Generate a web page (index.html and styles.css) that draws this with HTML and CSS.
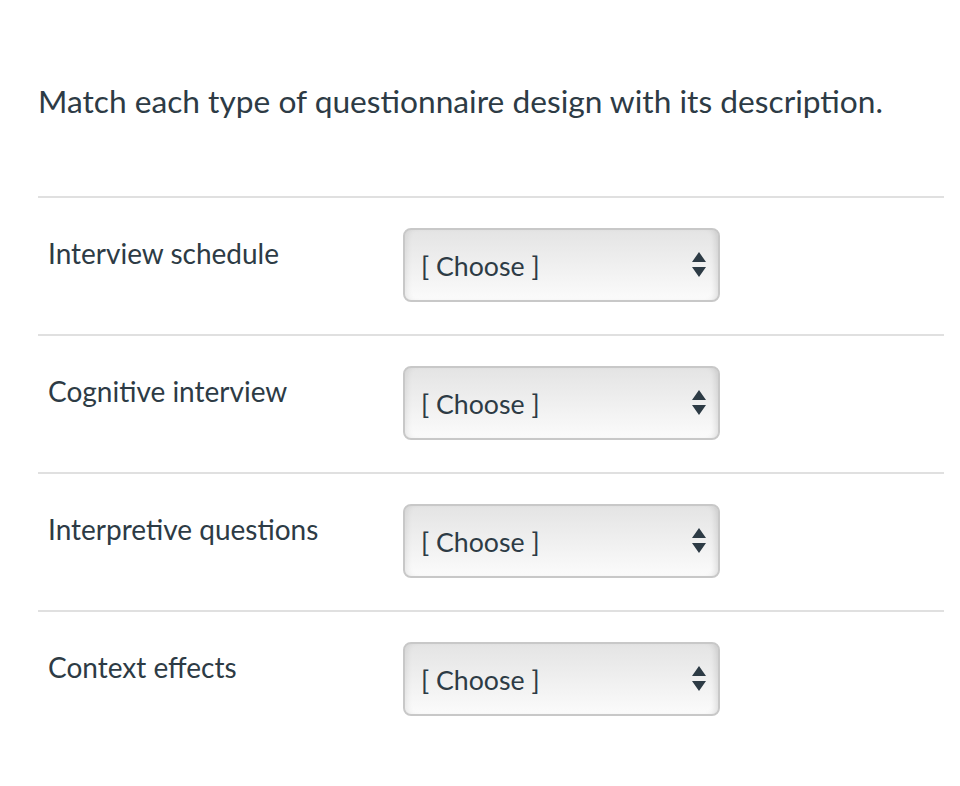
FILE: index.html
```html
<!DOCTYPE html>
<html lang="en">
<head>
<meta charset="utf-8">
<title>Matching question</title>
<link rel="stylesheet" href="styles.css">
</head>
<body>
<div class="question">
  <p class="prompt">Match each type of questionnaire design with its description.</p>
  <div class="answers">
    <div class="row">
      <div class="label">Interview schedule</div>
      <div class="select-wrap">
        <select class="select"><option>[ Choose ]</option></select>
        <svg class="arrows" width="14" height="25" viewBox="0 0 14 25"><path d="M7 0 L14 10 L0 10 Z M0 15 L14 15 L7 25 Z" fill="#2d3b45"/></svg>
      </div>
    </div>
    <div class="row">
      <div class="label">Cognitive interview</div>
      <div class="select-wrap">
        <select class="select"><option>[ Choose ]</option></select>
        <svg class="arrows" width="14" height="25" viewBox="0 0 14 25"><path d="M7 0 L14 10 L0 10 Z M0 15 L14 15 L7 25 Z" fill="#2d3b45"/></svg>
      </div>
    </div>
    <div class="row">
      <div class="label">Interpretive questions</div>
      <div class="select-wrap">
        <select class="select"><option>[ Choose ]</option></select>
        <svg class="arrows" width="14" height="25" viewBox="0 0 14 25"><path d="M7 0 L14 10 L0 10 Z M0 15 L14 15 L7 25 Z" fill="#2d3b45"/></svg>
      </div>
    </div>
    <div class="row">
      <div class="label">Context effects</div>
      <div class="select-wrap">
        <select class="select"><option>[ Choose ]</option></select>
        <svg class="arrows" width="14" height="25" viewBox="0 0 14 25"><path d="M7 0 L14 10 L0 10 Z M0 15 L14 15 L7 25 Z" fill="#2d3b45"/></svg>
      </div>
    </div>
  </div>
</div>
</body>
</html>
```
FILE: styles.css
```css
html, body {
  margin: 0;
  padding: 0;
  background: #ffffff;
}
body {
  font-family: Lato, "Liberation Sans", sans-serif;
  color: #2d3b45;
}
.question {
  padding: 0 16px 0 38px;
}
.prompt {
  margin: 0;
  padding-top: 79px;
  font-size: 31.7px;
  line-height: 44px;
  height: 117px;
}
.answers {
  display: flex;
  flex-direction: column;
}
.row {
  display: flex;
  align-items: flex-start;
  border-top: 2px solid #e0e0e0;
  padding: 30px 0 32px 10px;
}
.label {
  width: 355px;
  flex: none;
  font-size: 28px;
  line-height: 36px;
  padding-top: 7px;
}
.select-wrap {
  position: relative;
  width: 317px;
  height: 74px;
}
.select {
  appearance: none;
  -webkit-appearance: none;
  width: 100%;
  height: 100%;
  margin: 0;
  border: 2px solid #c8c8c8;
  border-radius: 8px;
  background: linear-gradient(#e4e4e4, #fbfbfb);
  box-shadow: inset 6px 0 6px -4px rgba(0,0,0,0.08), inset -6px 0 6px -4px rgba(0,0,0,0.12);
  font-family: Lato, "Liberation Sans", sans-serif;
  font-size: 26.7px;
  color: #2d3b45;
  padding: 2px 40px 0 16px;
}
.arrows {
  position: absolute;
  right: 14px;
  top: 24px;
  pointer-events: none;
}
```
